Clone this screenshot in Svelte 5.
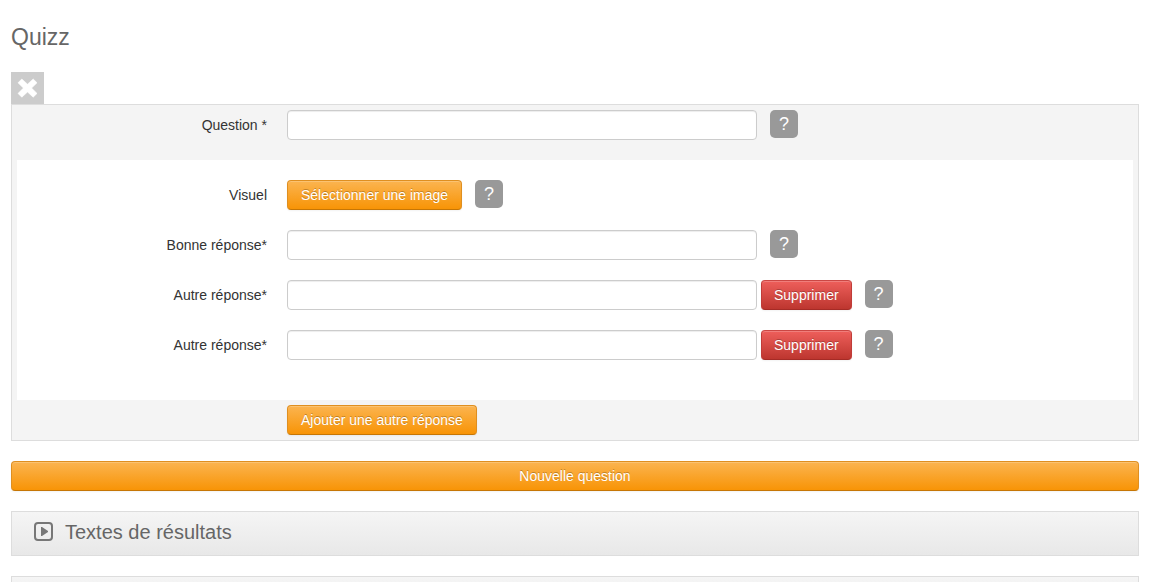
<script>
  let question = $state('');
  let good = $state('');
  let others = $state([{ id: 1, text: '' }, { id: 2, text: '' }]);
  let nextId = 3;

  function add() {
    others.push({ id: nextId++, text: '' });
  }

  function remove(id) {
    others = others.filter((o) => o.id !== id);
  }
</script>

<main>
  <h1>Quizz</h1>

  <section class="question">
    <button type="button" class="close">
      <svg width="21" height="21" viewBox="0 0 21 21" aria-hidden="true">
        <path d="M4.8 1 L10.5 6.2 L16.2 1 L20 4.8 L14.6 10.1 L20 15.4 L16.2 19.2 L10.5 14 L4.8 19.2 L1 15.4 L6.4 10.1 L1 4.8 Z" fill="#fff" stroke="#fff" stroke-width="0.6" stroke-linejoin="round" />
      </svg>
    </button>
    <div class="box">
      <div class="row">
        <label for="question">Question *</label>
        <div class="controls">
          <input id="question" type="text" bind:value={question} />
          <button type="button" class="help">?</button>
        </div>
      </div>

      <div class="answers">
        <div class="row">
          <label for="visual">Visuel</label>
          <div class="controls">
            <button id="visual" type="button" class="btn warning">Sélectionner une image</button>
            <button type="button" class="help">?</button>
          </div>
        </div>
        <div class="row">
          <label for="good">Bonne réponse*</label>
          <div class="controls">
            <input id="good" type="text" bind:value={good} />
            <button type="button" class="help">?</button>
          </div>
        </div>
        {#each others as other (other.id)}
          <div class="row">
            <label for="other-{other.id}">Autre réponse*</label>
            <div class="controls">
              <input id="other-{other.id}" type="text" bind:value={other.text} />
              <button type="button" class="btn danger" onclick={() => remove(other.id)}>Supprimer</button>
              <button type="button" class="help">?</button>
            </div>
          </div>
        {/each}
      </div>

      <div class="actions">
        <button type="button" class="btn warning" onclick={add}>Ajouter une autre réponse</button>
      </div>
    </div>
  </section>

  <button type="button" class="btn warning block">Nouvelle question</button>

  <h2 class="panel">
    <button type="button" class="toggle">
      <svg width="19" height="20" viewBox="0 0 19 20" aria-hidden="true">
        <rect x="1" y="1" width="17" height="17" rx="3" fill="none" stroke="#777" stroke-width="2" />
        <path d="M7 5 L8 5 L14 9 L14 10 L8 14 L7 14 Z" fill="#777" />
      </svg>
      <span>Textes de résultats</span>
    </button>
  </h2>

  <div class="panel"></div>
</main>

<style>
  :global(body) {
    margin: 0;
    background: #fff;
  }

  main {
    box-sizing: border-box;
    height: 100vh;
    overflow: hidden;
    padding: 17px 10px 0 11px;
    color: #333;
    font: 14px/20px "Liberation Sans", Arial, sans-serif;
  }

  h1 {
    margin: 0 0 15px;
    color: #666;
    font-size: 23px;
    font-weight: 400;
    line-height: 40px;
  }

  button,
  input {
    box-sizing: border-box;
    margin: 0;
    font: inherit;
  }

  button {
    cursor: pointer;
  }

  .question {
    margin-bottom: 20px;
  }

  .close {
    display: flex;
    align-items: center;
    justify-content: center;
    width: 33px;
    height: 32px;
    padding: 0;
    border: 0;
    background: #ccc;
  }

  .box {
    padding: 5px;
    border: 1px solid #ddd;
    background: #f4f4f4;
  }

  .row {
    display: flex;
    gap: 20px;
    margin-bottom: 20px;
  }

  .row label {
    flex: none;
    width: 250px;
    padding-top: 5px;
    text-align: right;
  }

  .controls {
    display: flex;
    flex: 1;
    gap: 4px;
    min-width: 0;
  }

  input {
    width: 470px;
    min-width: 0;
    height: 30px;
    padding: 4px 6px;
    border: 1px solid #ccc;
    border-radius: 4px;
    background: #fff;
    box-shadow: inset 0 1px 1px rgba(0, 0, 0, 0.075);
    color: #555;
  }

  .answers {
    padding: 20px 0;
    background: #fff;
  }

  .help {
    flex: none;
    width: 28px;
    height: 28px;
    margin-left: 9px;
    padding: 0;
    border: 0;
    border-radius: 5px;
    background: #999;
    color: #fff;
    font-size: 18px;
    line-height: 28px;
  }

  .btn {
    flex: none;
    height: 30px;
    padding: 4px 12px;
    border: 1px solid;
    border-radius: 4px;
    box-shadow: inset 0 1px 0 rgba(255, 255, 255, 0.2), 0 1px 2px rgba(0, 0, 0, 0.05);
    color: #fff;
    text-shadow: 0 -1px 0 rgba(0, 0, 0, 0.25);
    white-space: nowrap;
  }

  .warning {
    padding: 4px 13px;
    border-color: #df8f20 #df8f20 #c67605;
    background: linear-gradient(#fbb450, #f89406);
  }

  .danger {
    border-color: #cb4744 #c03c38 #a52b26;
    background: linear-gradient(#ee5f5b, #bd362f);
  }

  .block {
    display: block;
    width: 100%;
  }

  .actions {
    padding: 5px 0 0 270px;
  }

  .panel {
    box-sizing: border-box;
    min-height: 45px;
    margin: 20px 0 0;
    border: 1px solid #ddd;
    background: linear-gradient(#f5f5f5, #e8e8e8);
    font-weight: 400;
  }

  .toggle {
    display: flex;
    align-items: center;
    gap: 12px;
    width: 100%;
    padding: 5px 22px 8px;
    border: 0;
    background: none;
    color: #666;
    font-size: 20px;
    line-height: 30px;
  }
</style>
